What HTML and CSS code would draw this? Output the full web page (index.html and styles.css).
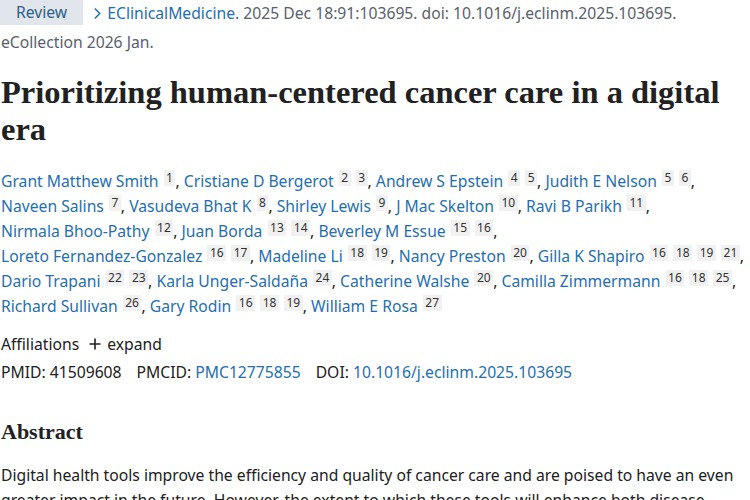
FILE: index.html
```html
<!DOCTYPE html>
<html lang="en">
<head>
<meta charset="utf-8">
<title>Prioritizing human-centered cancer care in a digital era</title>
<link rel="stylesheet" href="styles.css">
</head>
<body>
<main class="article">
  <div class="citation">
    <span class="badge">Review</span>
    <a class="journal" href="#"><svg class="chev" viewBox="0 0 10 14" width="9" height="13"><path d="M2 1.5 L7.5 7 L2 12.5" fill="none" stroke="currentColor" stroke-width="1.6"/></svg>EClinicalMedicine.</a>
    2025 Dec 18:91:103695. doi: 10.1016/j.eclinm.2025.103695. eCollection 2026 Jan.
  </div>

  <h1 class="title">Prioritizing human-centered cancer care in a digital era</h1>

  <div class="authors">
    <span class="author"><a href="#">Grant Matthew Smith</a> <sup>1</sup>,</span>
    <span class="author"><a href="#">Cristiane D Bergerot</a> <sup>2</sup> <sup>3</sup>,</span>
    <span class="author"><a href="#">Andrew S Epstein</a> <sup>4</sup> <sup>5</sup>,</span>
    <span class="author"><a href="#">Judith E Nelson</a> <sup>5</sup> <sup>6</sup>,</span><br>
    <span class="author"><a href="#">Naveen Salins</a> <sup>7</sup>,</span>
    <span class="author"><a href="#">Vasudeva Bhat K</a> <sup>8</sup>,</span>
    <span class="author"><a href="#">Shirley Lewis</a> <sup>9</sup>,</span>
    <span class="author"><a href="#">J Mac Skelton</a> <sup>10</sup>,</span>
    <span class="author"><a href="#">Ravi B Parikh</a> <sup>11</sup>,</span><br>
    <span class="author"><a href="#">Nirmala Bhoo-Pathy</a> <sup>12</sup>,</span>
    <span class="author"><a href="#">Juan Borda</a> <sup>13</sup> <sup>14</sup>,</span>
    <span class="author"><a href="#">Beverley M Essue</a> <sup>15</sup> <sup>16</sup>,</span><br>
    <span class="author"><a href="#">Loreto Fernandez-Gonzalez</a> <sup>16</sup> <sup>17</sup>,</span>
    <span class="author"><a href="#">Madeline Li</a> <sup>18</sup> <sup>19</sup>,</span>
    <span class="author"><a href="#">Nancy Preston</a> <sup>20</sup>,</span>
    <span class="author"><a href="#">Gilla K Shapiro</a> <sup>16</sup> <sup>18</sup> <sup>19</sup> <sup>21</sup>,</span><br>
    <span class="author"><a href="#">Dario Trapani</a> <sup>22</sup> <sup>23</sup>,</span>
    <span class="author"><a href="#">Karla Unger-Saldaña</a> <sup>24</sup>,</span>
    <span class="author"><a href="#">Catherine Walshe</a> <sup>20</sup>,</span>
    <span class="author"><a href="#">Camilla Zimmermann</a> <sup>16</sup> <sup>18</sup> <sup>25</sup>,</span><br>
    <span class="author"><a href="#">Richard Sullivan</a> <sup>26</sup>,</span>
    <span class="author"><a href="#">Gary Rodin</a> <sup>16</sup> <sup>18</sup> <sup>19</sup>,</span>
    <span class="author"><a href="#">William E Rosa</a> <sup>27</sup></span>
  </div>

  <div class="affil">
    <span>Affiliations</span>
    <button class="expand"><svg viewBox="0 0 12 12" width="12" height="12"><path d="M6 0.5 V11.5 M0.5 6 H11.5" stroke="currentColor" stroke-width="1.6"/></svg>expand</button>
  </div>

  <div class="ids">
    <span>PMID: 41509608</span>
    <span>PMCID: <a href="#">PMC12775855</a></span>
    <span>DOI: <a href="#">10.1016/j.eclinm.2025.103695</a></span>
  </div>

  <h2 class="abs-title">Abstract</h2>
  <p class="abs">Digital health tools improve the efficiency and quality of cancer care and are poised to have an even greater impact in the future. However, the extent to which these tools will enhance both disease-directed and supportive care remains uncertain.</p>
</main>
</body>
</html>
```

FILE: styles.css
```css
html, body {
  margin: 0;
  padding: 0;
  background: #ffffff;
}
body {
  font-family: "Noto Sans", "Open Sans", sans-serif;
  font-size: 15.7px;
  color: #212121;
  overflow: hidden;
}
a {
  color: #1f6fb0;
  text-decoration: none;
}
.article {
  width: 740px;
  padding-left: 1px;
}
.citation {
  line-height: 29px;
  color: #5b616b;
  margin-top: -1px;
}
.badge {
  display: inline-block;
  vertical-align: top;
  margin-top: 1px;
  background: #e1e6ed;
  color: #2e5e88;
  padding: 0 16px;
  margin-left: -1px;
  margin-right: 6px;
  line-height: 25px;
}
.journal {
  color: #1f6fb0;
}
.chev {
  vertical-align: -1px;
  margin-right: 5px;
}
.title {
  font-family: "Liberation Serif", serif;
  font-weight: bold;
  font-size: 32.5px;
  line-height: 37px;
  margin: 17px 0 21px;
  color: #212121;
}
.authors {
  line-height: 25px;
  width: 760px;
}
.author {
  white-space: nowrap;
}
.authors sup {
  display: inline-block;
  font-size: 12px;
  line-height: 16px;
  vertical-align: 5px;
  background: #f1f1f1;
  color: #333;
  padding: 0 2.5px;
  margin-left: 1px;
}
.affil {
  margin-top: 13px;
  line-height: 24px;
  display: flex;
  align-items: center;
  gap: 10px;
}
.expand {
  border: 0;
  background: none;
  padding: 0;
  font: inherit;
  color: #212121;
  display: flex;
  align-items: center;
  gap: 6px;
}
.ids {
  line-height: 24px;
  margin-top: 4px;
  display: flex;
  gap: 15px;
}
.abs-title {
  font-family: "Liberation Serif", serif;
  font-weight: bold;
  font-size: 22px;
  line-height: 28px;
  margin: 34px 0 17px;
}
.abs {
  line-height: 25px;
  margin: 0;
}
```
